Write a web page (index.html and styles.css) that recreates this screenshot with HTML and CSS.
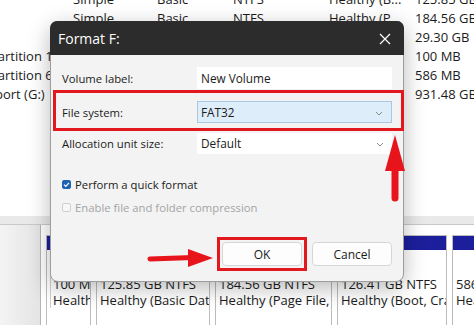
FILE: index.html
```html
<!DOCTYPE html>
<html lang="en">
<head>
    <meta charset="UTF-8">
    <meta name="viewport" content="width=device-width, initial-scale=1.0">
    <title>Format F:</title>
    <link rel="stylesheet" href="styles.css">
</head>
<body>
    <div class="app">
        <div class="volumes">
            <div class="vol-row"><span>(C:)</span><span>Simple</span><span>Basic</span><span>NTFS</span><span>Healthy (B...</span><span>125.85 GB</span></div>
            <div class="vol-row"><span>(D:)</span><span>Simple</span><span>Basic</span><span>NTFS</span><span>Healthy (P...</span><span>184.56 GB</span></div>
            <div class="vol-row"><span></span><span></span><span></span><span></span><span></span><span>29.30 GB</span></div>
            <div class="vol-row"><span>(Disk 0 partition 1)</span><span></span><span></span><span></span><span></span><span>100 MB</span></div>
            <div class="vol-row"><span>(Disk 0 partition 6)</span><span></span><span></span><span></span><span></span><span>586 MB</span></div>
            <div class="vol-row"><span>My Passport (G:)</span><span></span><span></span><span></span><span></span><span>931.48 GB</span></div>
        </div>
        <div class="splitter"></div>
        <div class="diskmap">
            <div class="disk-label"></div>
            <div class="partition first">
                <div class="part-bar"></div>
                <div class="part-body">
                    <div>&nbsp;</div>
                    <div>100 MB</div>
                    <div>Healthy (EFI System Partition)</div>
                </div>
            </div>
            <div class="partition w2">
                <div class="part-bar"></div>
                <div class="part-body">
                    <div>&nbsp;</div>
                    <div>125.85 GB NTFS</div>
                    <div>Healthy (Basic Data Partition)</div>
                </div>
            </div>
            <div class="partition w3">
                <div class="part-bar"></div>
                <div class="part-body">
                    <div>&nbsp;</div>
                    <div>184.56 GB NTFS</div>
                    <div>Healthy (Page File, Basic Data Partition)</div>
                </div>
            </div>
            <div class="partition w4">
                <div class="part-bar"></div>
                <div class="part-body">
                    <div>&nbsp;</div>
                    <div>126.41 GB NTFS</div>
                    <div>Healthy (Boot, Crash Dump, Basic Data Partition)</div>
                </div>
            </div>
            <div class="partition last">
                <div class="part-bar"></div>
                <div class="part-body">
                    <div>&nbsp;</div>
                    <div>586 MB</div>
                    <div>Healthy (Recovery Partition)</div>
                </div>
            </div>
        </div>
    </div>

    <div class="dialog">
        <div class="titlebar">
            <span>Format F:</span>
            <svg class="close" width="12" height="12" viewBox="0 0 12 12">
                <path d="M1 1 L11 11 M11 1 L1 11" stroke="#fff" stroke-width="1.2" fill="none"/>
            </svg>
        </div>
        <div class="dlg-body">
            <div class="field">
                <label>Volume label:</label>
                <div class="textbox">New Volume</div>
            </div>
            <div class="field highlight">
                <label>File system:</label>
                <div class="select focused">FAT32
                    <svg class="chev" width="8" height="5" viewBox="0 0 8 5"><path d="M1 1 L4 4 L7 1" stroke="#888" fill="none"/></svg>
                </div>
            </div>
            <div class="field tight">
                <label>Allocation unit size:</label>
                <div class="select">Default
                    <svg class="chev" width="8" height="5" viewBox="0 0 8 5"><path d="M1 1 L4 4 L7 1" stroke="#888" fill="none"/></svg>
                </div>
            </div>
            <div class="check first">
                <span class="box checked">
                    <svg width="9" height="9" viewBox="0 0 9 9"><path d="M2 4.6 L3.8 6.3 L7 2.8" stroke="#fff" stroke-width="1.2" fill="none"/></svg>
                </span>
                Perform a quick format
            </div>
            <div class="check disabled">
                <span class="box"></span>
                Enable file and folder compression
            </div>
            <div class="buttons">
                <div class="mark"><button class="btn">OK</button></div>
                <button class="btn">Cancel</button>
            </div>
        </div>
    </div>

    <!-- red callout arrows drawn over the screenshot -->
    <svg class="arrow arrow-up" width="24" height="70" viewBox="0 0 24 70">
        <path d="M12 32 L12 65" stroke="#e8141c" stroke-width="7" stroke-linecap="round"/>
        <polygon points="12,2 22,38 2,38" fill="#e8141c"/>
    </svg>
    <svg class="arrow arrow-right" width="70" height="22" viewBox="0 0 70 22">
        <path d="M3 12 L46 10.5" stroke="#e8141c" stroke-width="5" stroke-linecap="round"/>
        <polygon points="41,2 66,11 41,20" fill="#e8141c"/>
    </svg>
</body>
</html>
```

FILE: styles.css
```css
body {
    margin: 0;
    width: 474px;
    height: 325px;
    overflow: hidden;
    position: relative;
    background: #fff;
    font-family: "Open Sans", "Noto Sans", sans-serif;
    color: #1b1b1b;
}

.app { height: 325px; }

.volumes {
    height: 226px;
    margin-top: -10px;
    margin-left: -54px;
    font-size: 13px;
}
.vol-row {
    display: grid;
    grid-template-columns: 127px 84px 76px 96px 86px 120px;
    height: 19px;
    line-height: 19px;
    white-space: nowrap;
}
.vol-row span { overflow: hidden; }

.splitter {
    height: 8px;
    background: #e9e9e9;
    border-bottom: 1px solid #c9c9c9;
}

.diskmap {
    display: flex;
    gap: 5px;
    height: 100px;
    padding-top: 10px;
    font-size: 13px;
    white-space: nowrap;
}
.disk-label {
    width: 40px;
    margin-top: -10px;
    background: linear-gradient(to right, #f4f4f4, #e4e4e4);
    border-right: 1px solid #b5b5b5;
}
.partition {
    border: 1px solid #bcbcbc;
    overflow: hidden;
    background: #fff;
    flex-shrink: 0;
}
.partition.first { width: 43px; }
.partition.w2 { width: 112px; }
.partition.w3 { width: 115px; }
.partition.w4 { width: 108px; }
.partition.last { flex: 1 1 0; min-width: 0; border-right: 0; }
.part-bar {
    height: 14px;
    background: #1c1f9c;
}
.part-body {
    padding: 9px 4px 0 3px;
    line-height: 16px;
    border-top: 1px solid #fff;
}
.partition.first .part-body {
    padding-left: 2px;
    border-left: 1px solid #cfcfcf;
    margin-left: 3px;
}

.dialog {
    position: absolute;
    left: 50px;
    top: 21px;
    width: 352px;
    height: 259px;
    border: 1px solid #9d9d9d;
    border-radius: 8px;
    background: #f3f3f3;
    box-shadow: 0 6px 22px rgba(0, 0, 0, 0.28);
}
.titlebar {
    height: 34px;
    background: #2c2c2c;
    color: #fff;
    border-radius: 7px 7px 0 0;
    display: flex;
    align-items: center;
    justify-content: space-between;
    padding: 0 13px 0 8px;
    font-size: 14px;
    margin: -1px -1px 0;
}
.close { margin-top: 1px; }

.dlg-body {
    padding: 12px 11px 0;
    font-size: 11.3px;
}
.field {
    display: grid;
    grid-template-columns: 135px 195px;
    align-items: center;
}
.textbox, .select {
    height: 22px;
    line-height: 22px;
    padding: 0 4px;
    background: #fff;
    box-sizing: border-box;
    position: relative;
    font-size: 11.8px;
}
.select.focused {
    background: #deedfa;
    border: 1px solid #a9c8e4;
    line-height: 20px;
    padding-left: 3px;
}
.chev {
    position: absolute;
    right: 8px;
    top: 9px;
}
.highlight {
    border: 3px solid #e3171e;
    margin: 1px -12px 0 -9px;
    padding: 8px 9px 5px 6px;
}
.tight { margin-top: 2px; }
.tight .select { height: 21px; line-height: 21px; }

.check {
    display: flex;
    align-items: center;
    gap: 4px;
    height: 20px;
    margin-top: 3px;
}
.check.first { margin-top: 20px; }
.check.disabled { color: #a4a4a4; }
.box {
    width: 9px;
    height: 9px;
    box-sizing: border-box;
    border: 1px solid #cfcfcf;
    border-radius: 2px;
    background: #f7f7f7;
    display: flex;
}
.box.checked {
    background: #1f63b5;
    border-color: #1f63b5;
}
.box svg { margin: -1px; }

.buttons {
    display: flex;
    justify-content: flex-end;
    align-items: center;
    gap: 5px;
    margin-top: 20px;
}
.mark {
    border: 3px solid #e3171e;
    padding: 2px;
    display: flex;
}
.btn {
    width: 80px;
    height: 24px;
    border: 1px solid #d6d6d6;
    border-radius: 4px;
    background: #fdfdfd;
    font-family: inherit;
    font-size: 12px;
    color: #1b1b1b;
    padding: 0;
}

.arrow { position: absolute; }
.arrow-up { left: 383px; top: 133px; }
.arrow-right { left: 147px; top: 247px; }
```
